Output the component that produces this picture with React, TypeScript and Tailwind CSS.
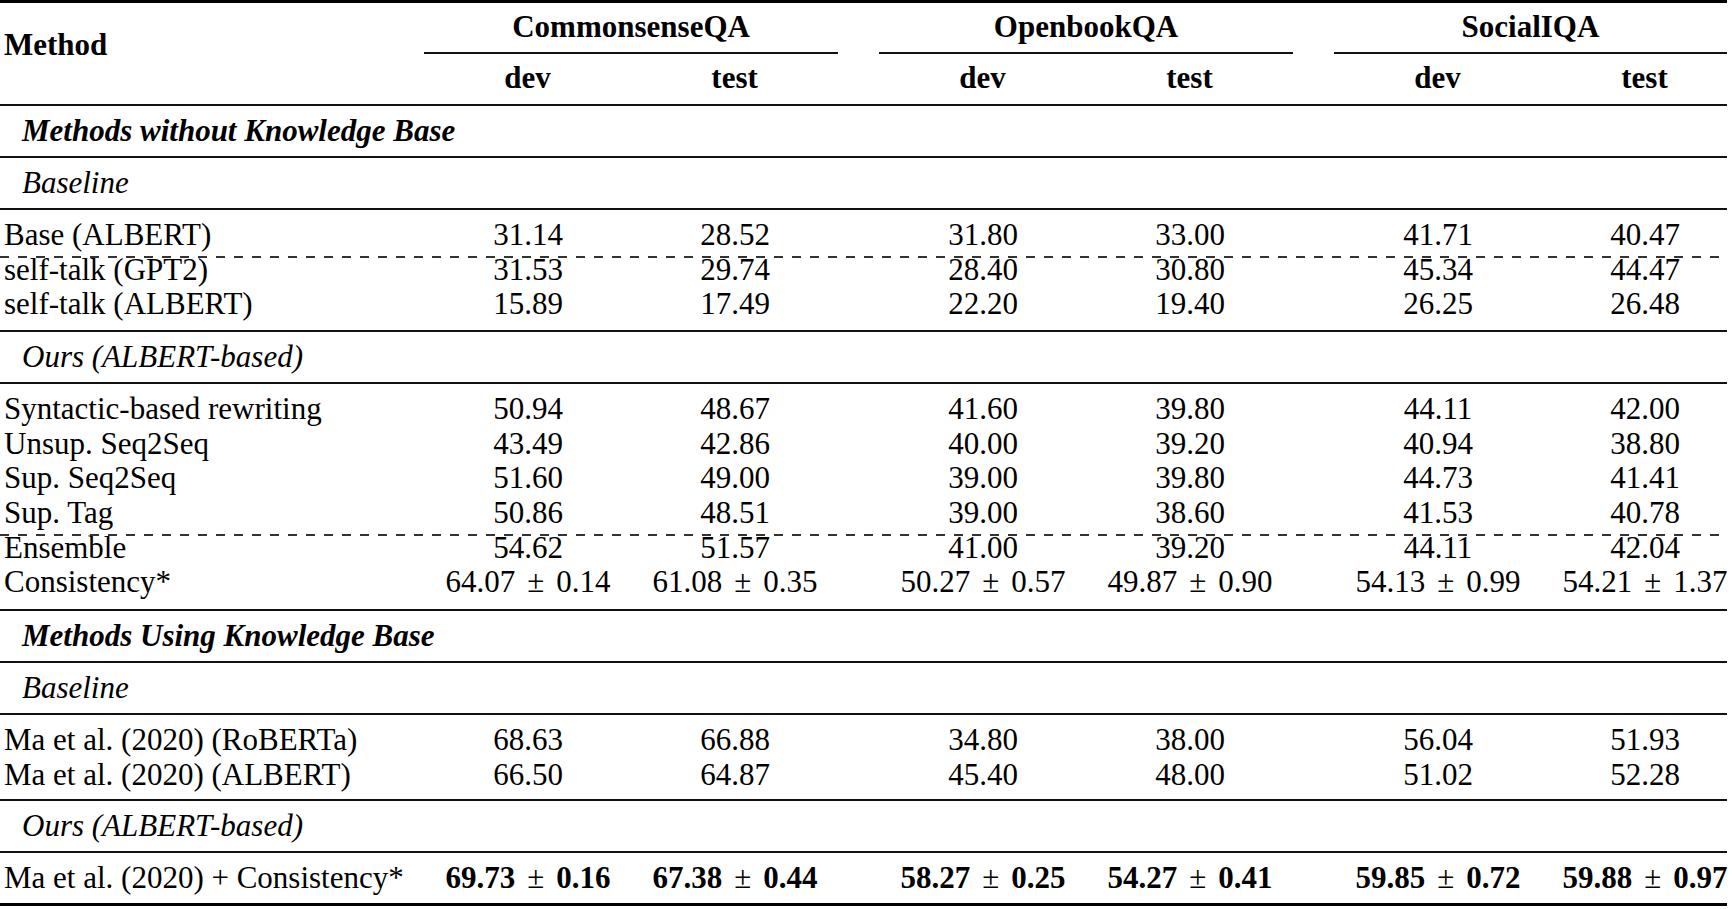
import React from "react";

const GRID =
  "grid grid-cols-[424.5px_207px_207px_41px_207px_207px_41px_207px_186px]";

type RowData = { name: string; vals: string[]; dashed?: boolean; bold?: boolean };

function Val({ v, bold }: { v: string; bold?: boolean }) {
  if (v.includes("±")) {
    const [a, b] = v.split("±").map((s) => s.trim());
    return (
      <span className={bold ? "font-bold" : ""}>
        {a}
        <span className="font-normal mx-[12px]">±</span>
        {b}
      </span>
    );
  }
  return <span className={bold ? "font-bold" : ""}>{v}</span>;
}

function Row({ r }: { r: RowData }) {
  return (
    <div className={`${GRID} relative h-[34.6px] leading-[34.6px] whitespace-nowrap`}>
      {r.dashed && (
        <div className="absolute left-0 right-0 top-[3px] h-[2px] bg-[repeating-linear-gradient(to_right,#333_0px,#333_9px,transparent_9px,transparent_18px)]" />
      )}
      <div className="pl-[4px]">{r.name}</div>
      <div className="text-center"><Val v={r.vals[0]} bold={r.bold} /></div>
      <div className="text-center"><Val v={r.vals[1]} bold={r.bold} /></div>
      <div />
      <div className="text-center"><Val v={r.vals[2]} bold={r.bold} /></div>
      <div className="text-center"><Val v={r.vals[3]} bold={r.bold} /></div>
      <div />
      <div className="text-center"><Val v={r.vals[4]} bold={r.bold} /></div>
      <div className="text-center pl-[21px]"><Val v={r.vals[5]} bold={r.bold} /></div>
    </div>
  );
}

function Rule() {
  return <div className="h-[2px] bg-[#111]" />;
}

function Block({ children, pb = "pb-[7.4px]" }: { children: React.ReactNode; pb?: string }) {
  return <div className={`pt-[8px] ${pb}`}>{children}</div>;
}

function Section({ children, bold }: { children: React.ReactNode; bold?: boolean }) {
  return (
    <div
      className={`h-[34.6px] leading-[34.6px] pl-[22px] italic whitespace-nowrap ${bold ? "font-bold" : ""}`}
    >
      {children}
    </div>
  );
}

function Group({ title, w, lastPad }: { title: string; w: string; lastPad?: boolean }) {
  return (
    <div className={`${w} flex flex-col pt-[6.7px]`}>
      <div className="h-[34.6px] leading-[34.6px] text-center font-bold">{title}</div>
      <div className="mt-[8px] h-[1.5px] bg-[#111]" />
      <div className="mt-[7px] h-[34.6px] leading-[34.6px] flex font-bold">
        <div className="w-[207px] text-center">dev</div>
        <div className={`${lastPad ? "w-[186px] pl-[21px]" : "w-[207px]"} text-center`}>test</div>
      </div>
    </div>
  );
}

const data3: RowData[] = [
  { name: "Base (ALBERT)", vals: ["31.14", "28.52", "31.80", "33.00", "41.71", "40.47"] },
  { name: "self-talk (GPT2)", vals: ["31.53", "29.74", "28.40", "30.80", "45.34", "44.47"], dashed: true },
  { name: "self-talk (ALBERT)", vals: ["15.89", "17.49", "22.20", "19.40", "26.25", "26.48"] },
];

const data6: RowData[] = [
  { name: "Syntactic-based rewriting", vals: ["50.94", "48.67", "41.60", "39.80", "44.11", "42.00"] },
  { name: "Unsup. Seq2Seq", vals: ["43.49", "42.86", "40.00", "39.20", "40.94", "38.80"] },
  { name: "Sup. Seq2Seq", vals: ["51.60", "49.00", "39.00", "39.80", "44.73", "41.41"] },
  { name: "Sup. Tag", vals: ["50.86", "48.51", "39.00", "38.60", "41.53", "40.78"] },
  { name: "Ensemble", vals: ["54.62", "51.57", "41.00", "39.20", "44.11", "42.04"], dashed: true },
  {
    name: "Consistency*",
    vals: ["64.07 ± 0.14", "61.08 ± 0.35", "50.27 ± 0.57", "49.87 ± 0.90", "54.13 ± 0.99", "54.21 ± 1.37"],
  },
];

const data2: RowData[] = [
  { name: "Ma et al. (2020) (RoBERTa)", vals: ["68.63", "66.88", "34.80", "38.00", "56.04", "51.93"] },
  { name: "Ma et al. (2020) (ALBERT)", vals: ["66.50", "64.87", "45.40", "48.00", "51.02", "52.28"] },
];

const finalRow: RowData = {
  name: "Ma et al. (2020) + Consistency*",
  vals: ["69.73 ± 0.16", "67.38 ± 0.44", "58.27 ± 0.25", "54.27 ± 0.41", "59.85 ± 0.72", "59.88 ± 0.97"],
  bold: true,
};

export default function App() {
  return (
    <div className="w-[1732px] h-[909px] bg-white text-black font-['Liberation_Serif','Times_New_Roman',serif] text-[31px] overflow-hidden">
      <div className="w-[1727px]">
        <div className="h-[3px] bg-black" />
        {/* Header */}
        <div className="flex h-[101px]">
          <div className="w-[424.5px] pl-[4px] pt-[24.7px]">
            <div className="h-[34.6px] leading-[34.6px] font-bold">Method</div>
          </div>
          <Group title="CommonsenseQA" w="w-[414px]" />
          <div className="w-[41px]" />
          <Group title="OpenbookQA" w="w-[414px]" />
          <div className="w-[41px]" />
          <Group title="SocialIQA" w="w-[393px]" lastPad />
        </div>
        <Rule />
        <Block>
          <Section bold>Methods without Knowledge Base</Section>
        </Block>
        <Rule />
        <Block>
          <Section>Baseline</Section>
        </Block>
        <Rule />
        <Block pb="pb-[8.4px]">
          {data3.map((r) => (
            <Row key={r.name} r={r} />
          ))}
        </Block>
        <Rule />
        <Block>
          <Section>Ours (ALBERT-based)</Section>
        </Block>
        <Rule />
        <Block pb="pb-[9.4px]">
          {data6.map((r) => (
            <Row key={r.name} r={r} />
          ))}
        </Block>
        <Rule />
        <Block>
          <Section bold>Methods Using Knowledge Base</Section>
        </Block>
        <Rule />
        <Block>
          <Section>Baseline</Section>
        </Block>
        <Rule />
        <Block pb="pb-[7px]">
          {data2.map((r) => (
            <Row key={r.name} r={r} />
          ))}
        </Block>
        <Rule />
        <Block>
          <Section>Ours (ALBERT-based)</Section>
        </Block>
        <Rule />
        <Block>
          <Row r={finalRow} />
        </Block>
        <div className="h-[3px] bg-black" />
      </div>
    </div>
  );
}
